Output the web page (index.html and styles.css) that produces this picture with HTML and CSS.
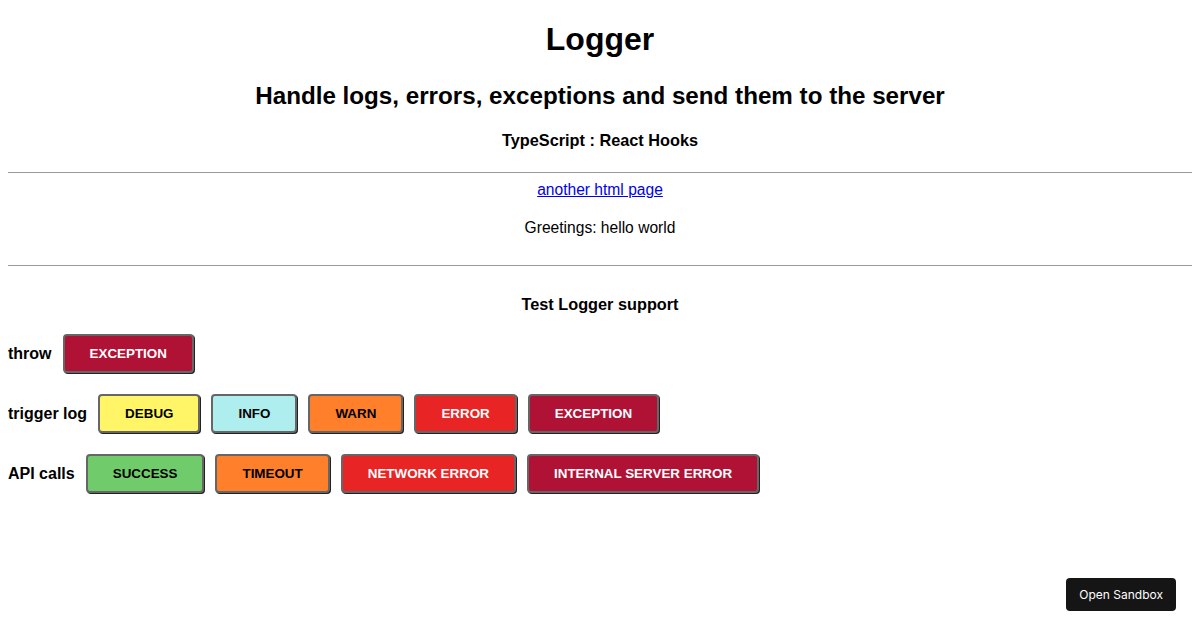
FILE: index.html
```html
<!DOCTYPE html>
<html lang="en">
<head>
    <meta charset="UTF-8">
    <meta name="viewport" content="width=device-width, initial-scale=1.0">
    <title>Logger</title>
    <link rel="stylesheet" href="styles.css">
</head>
<body>
    <div class="app">
        <h1 class="title">Logger</h1>
        <h2 class="subtitle">Handle logs, errors, exceptions and send them to the server</h2>
        <h4 class="stack">TypeScript : React Hooks</h4>
        <hr class="divider">
        <p class="nav-link"><a href="#">another html page</a></p>
        <p class="greeting">Greetings: hello world</p>
        <hr class="divider">
        <h4 class="section-title">Test Logger support</h4>

        <div class="row">
            <span class="row-label">throw</span>
            <button class="btn exception">Exception</button>
        </div>
        <div class="row">
            <span class="row-label">trigger log</span>
            <button class="btn debug">Debug</button>
            <button class="btn info">Info</button>
            <button class="btn warn">Warn</button>
            <button class="btn error">Error</button>
            <button class="btn exception">Exception</button>
        </div>
        <div class="row">
            <span class="row-label">API calls</span>
            <button class="btn success">Success</button>
            <button class="btn warn">Timeout</button>
            <button class="btn error">Network error</button>
            <button class="btn exception">Internal server error</button>
        </div>
    </div>

    <a class="sandbox-link" href="#">Open Sandbox</a>
</body>
</html>
```

FILE: styles.css
```css
/* Page base */
body {
    margin: 0;
    padding: 0 8px;
    font-family: 'Liberation Sans', Arial, sans-serif;
    color: #000;
    background-color: #fff;
}

.app {
    text-align: center;
    padding-top: 21px;
}

.title {
    font-size: 32px;
    line-height: 37px;
    margin: 0 0 24px;
}

.subtitle {
    font-size: 24.2px;
    line-height: 28px;
    margin: 0 0 21px;
}

.stack,
.section-title {
    font-size: 16.3px;
    line-height: 18px;
    margin: 0;
}

.divider {
    border: 0;
    border-top: 1px solid #9a9a9a;
    margin: 23px 0 0;
}

.nav-link,
.greeting {
    font-size: 15.6px;
    line-height: 18px;
    margin: 0;
}

.nav-link {
    margin-top: 8px;
}

.greeting {
    margin-top: 20px;
}

.greeting + .divider {
    margin-top: 28px;
}

.section-title {
    margin: 29px 0 21px;
}

a {
    color: #0000ee;
}

/* Rows of test buttons */
.row {
    display: flex;
    align-items: center;
    gap: 11px;
    margin-bottom: 21px;
}

.row-label {
    font-weight: bold;
    font-size: 16px;
}

.btn {
    font-family: 'Liberation Sans', Arial, sans-serif;
    font-size: 13.4px;
    font-weight: bold;
    text-transform: uppercase;
    line-height: 15px;
    padding: 10px 25px;
    border: 2px solid #666;
    border-radius: 4px;
    box-shadow: 1px 1px 0 #222;
    color: #000;
    cursor: pointer;
}

.btn.debug { background-color: #fff566; }
.btn.info { background-color: #aeeeee; }
.btn.warn { background-color: #ff7f2a; }
.btn.error { background-color: #e82424; color: #fff; }
.btn.exception { background-color: #b01236; color: #fff; }
.btn.success { background-color: #70cc6a; }

/* Floating sandbox button */
.sandbox-link {
    position: fixed;
    right: 24px;
    bottom: 19px;
    background-color: #151515;
    color: #fff;
    font-family: 'Inter', 'Liberation Sans', sans-serif;
    font-size: 12px;
    line-height: 15px;
    text-decoration: none;
    padding: 9px 13px;
    border-radius: 4px;
}
```
